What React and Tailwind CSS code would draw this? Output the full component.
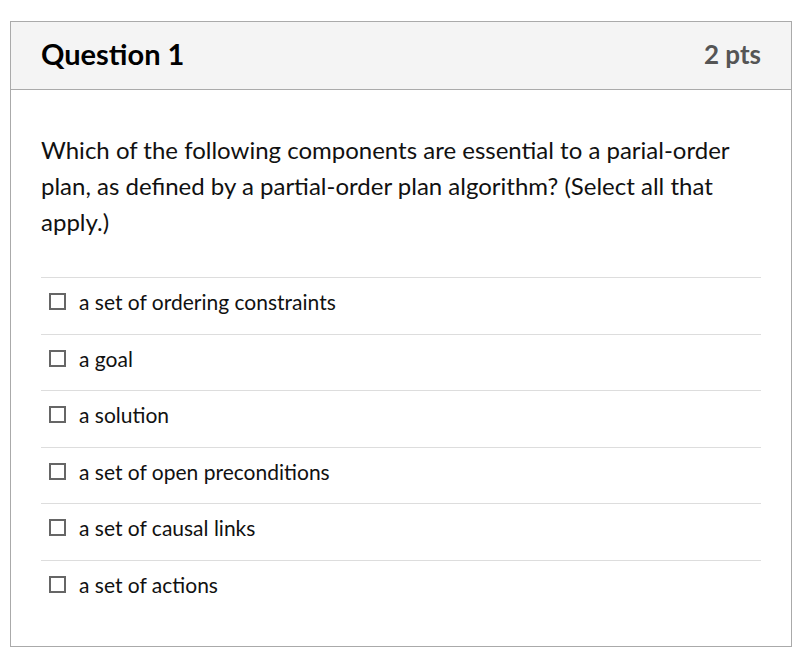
export default function App() {
  const options = [
    'a set of ordering constraints',
    'a goal',
    'a solution',
    'a set of open preconditions',
    'a set of causal links',
    'a set of actions',
  ]

  return (
    <div className="w-[804px] h-[666px] bg-white pt-[21px] pl-[10px]" style={{ fontFamily: 'Lato, "Open Sans", sans-serif' }}>
      <div className="w-[782px] h-[626px] border border-[#aaaaaa] flex flex-col">
        <div className="h-[68px] bg-[#f4f4f4] border-b border-[#aaaaaa] flex items-center justify-between pl-[30px] pr-[30px] pb-[4px]">
          <h2 className="text-[29px] font-bold text-black leading-none">Question 1</h2>
          <span className="text-[26px] font-bold text-[#555555] leading-none">2 pts</span>
        </div>

        <div className="px-[30px] pt-[42px]">
          <p className="text-[24px] leading-[36px] text-[#111111]">
            Which of the following components are essential to a parial-order plan, as defined by a partial-order plan algorithm? (Select all that apply.)
          </p>

          <div className="mt-[37px]">
            {options.map((opt) => (
              <label key={opt} className="h-[56.5px] border-t border-[#dddddd] flex items-center gap-[13px] pl-[8px] pb-[8px]">
                <span className="w-[17px] h-[17px] border-2 border-[#666666] shrink-0" />
                <span className="text-[21px] text-[#111111]">{opt}</span>
              </label>
            ))}
          </div>
        </div>
      </div>
    </div>
  )
}
